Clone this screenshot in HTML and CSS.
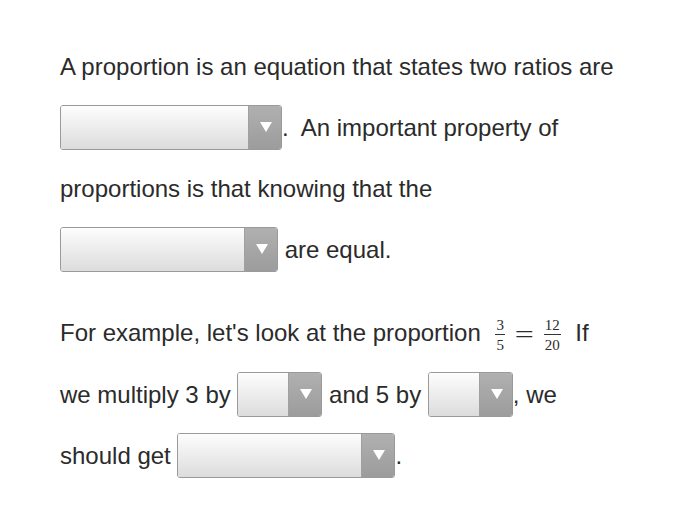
FILE: index.html
```html
<!DOCTYPE html>
<html lang="en">
<head>
    <meta charset="utf-8">
    <title>Proportions</title>
    <link rel="stylesheet" href="styles.css">
</head>
<body>
<div class="question">
    <p class="para">
        A proportion is an equation that states two ratios are<br>
        <span class="drop wide"><span class="field"></span><span class="arrow"></span></span>.&nbsp; An important property of<br>
        proportions is that knowing that the<br>
        <span class="drop mid"><span class="field"></span><span class="arrow"></span></span> are equal.
    </p>
    <p class="para second">
        <span class="math-line">For example, let's look at the proportion
        <span class="math"><span class="frac"><span class="num">3</span><span class="den">5</span></span><span class="eq">=</span><span class="frac"><span class="num">12</span><span class="den">20</span></span></span>
        If</span><br>
        we multiply 3 by
        <span class="drop small"><span class="field"></span><span class="arrow"></span></span> and 5 by
        <span class="drop small"><span class="field"></span><span class="arrow"></span></span>, we<br>
        should get
        <span class="drop mid"><span class="field"></span><span class="arrow"></span></span>.
    </p>
</div>
</body>
</html>
```

FILE: styles.css
```css
*{margin:0;padding:0;box-sizing:border-box;}
body{background:#fff;font-family:"Liberation Sans",Arial,sans-serif;color:#2b2b2b;}
.question{padding:36px 0 0 60px;font-size:24px;}
.para{line-height:61px;white-space:nowrap;}
.second{margin-top:22px;}
.math-line{display:inline-block;margin-bottom:1px;}
.drop{display:inline-flex;vertical-align:middle;height:45px;border:1px solid #9a9a9a;border-radius:3px;overflow:hidden;margin-top:-4px;}
.drop.wide{width:222px;}
.drop.mid{width:218px;}
.drop.small{width:85px;}
.field{flex:1;background:linear-gradient(#fdfdfd,#dcdcdc);}
.arrow{width:33px;background:linear-gradient(#b0b0b0,#9c9c9c);border-left:1px solid #a0a0a0;position:relative;}
.arrow::after{content:"";position:absolute;left:11px;top:16px;border-left:6px solid transparent;border-right:6px solid transparent;border-top:10px solid #fff;}
.math{display:inline-flex;align-items:center;vertical-align:middle;font-family:"Liberation Serif","Times New Roman",serif;margin:0 6px 0 6px;}
.frac{display:inline-flex;flex-direction:column;align-items:center;font-size:15px;line-height:14px;padding:0 2px;}
.num{border-bottom:1px solid #333;padding:0 1px 2px;}
.den{padding-top:3px;}
.eq{font-size:26px;margin:0 10px;line-height:20px;display:inline-block;transform:scaleX(1.3);}
```
